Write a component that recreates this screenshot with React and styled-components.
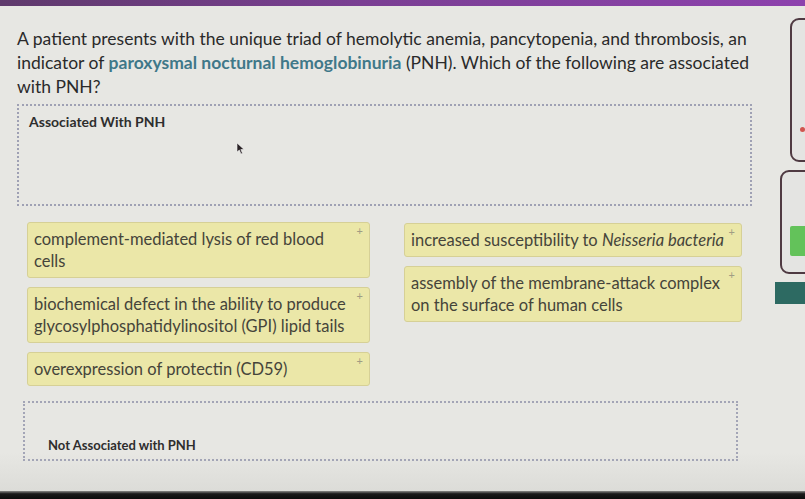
import React from 'react'
import styled, { createGlobalStyle } from 'styled-components'

const GlobalStyle = createGlobalStyle`
    html, body {
        margin: 0;
        padding: 0;
        height: 100%;
        overflow: hidden;
    }
    body {
        background-color: #e7e7e3;
        font-family: Lato, "Liberation Sans", sans-serif;
    }
    #root {
        height: 100%;
    }
`

const leftItems = [
    { id: 1, text: 'complement-mediated lysis of red blood cells' },
    { id: 2, text: 'biochemical defect in the ability to produce glycosylphosphatidylinositol (GPI) lipid tails' },
    { id: 3, text: 'overexpression of protectin (CD59)' },
]

const rightItems = [
    { id: 4, text: <>increased susceptibility to <i>Neisseria bacteria</i></> },
    { id: 5, text: 'assembly of the membrane-attack complex on the surface of human cells' },
]

const Cursor = () => (
    <CursorIcon width="9" height="13" viewBox="0 0 9 13">
        <path d="M1 1 L1 10 L3.3 8 L5 12 L6.5 11.3 L4.8 7.6 L8 7.4 Z" fill="#2a2326" stroke="#f4f4f4" strokeWidth="0.6" />
    </CursorIcon>
)

const App = () => {
    return (
        <Page>
            <GlobalStyle />
            <TopBar />

            <Body>
                <Main>
                    <Question>
                        A patient presents with the unique triad of hemolytic anemia, pancytopenia, and thrombosis, an
                        indicator of <Highlight>paroxysmal nocturnal hemoglobinuria</Highlight> (PNH). Which of the following are associated
                        with PNH?
                    </Question>

                    <DropZone $height={102}>
                        <ZoneLabel>Associated With PNH</ZoneLabel>
                        <Cursor />
                    </DropZone>

                    <CardArea>
                        <CardColumn $width={343}>
                            {leftItems.map(item => (
                                <Card key={item.id}>
                                    {item.text}
                                    <Plus>+</Plus>
                                </Card>
                            ))}
                        </CardColumn>
                        <CardColumn $width={338} $offset={1}>
                            {rightItems.map(item => (
                                <Card key={item.id}>
                                    {item.text}
                                    <Plus>+</Plus>
                                </Card>
                            ))}
                        </CardColumn>
                    </CardArea>

                    <BottomZone>
                        <ZoneLabel $small>Not Associated with PNH</ZoneLabel>
                    </BottomZone>
                </Main>

                <Rail>
                    <RailPanel $offset={15} $height={144}>
                        <RailDot />
                    </RailPanel>
                    <RailPanel $offset={5} $height={104}>
                        <GreenChip />
                    </RailPanel>
                    <TealBar />
                </Rail>
            </Body>

            <Bezel />
        </Page>
    )
}

export default App



const Page = styled.div`
    height: 100%;
    display: flex;
    flex-direction: column;
    overflow: hidden;
`

const TopBar = styled.div`
    height: 6px;
    flex-shrink: 0;
    background: linear-gradient(90deg, #5f3a6c 0%, #7a3f93 45%, #8d42ad 100%);
`

const Body = styled.div`
    display: flex;
    flex: 1;
    min-height: 0;
    background: linear-gradient(180deg, #e7e7e3 0%, #e7e7e3 92%, #dcdcd8 100%);
`

const Main = styled.div`
    width: 760px;
    flex-shrink: 0;
    padding: 21px 0 0 17px;
    box-sizing: border-box;
`

const Question = styled.p`
    margin: 0;
    width: 742px;
    font-size: 17.5px;
    line-height: 24px;
    color: #2a2a2a;
`

const Highlight = styled.span`
    font-weight: 700;
    color: #3f7889;
`

const DropZone = styled.div`
    position: relative;
    margin-top: 5px;
    width: 735px;
    height: ${p => p.$height}px;
    box-sizing: border-box;
    border: 2px dotted #9fa1b4;
    padding: 7px 10px;
`

const ZoneLabel = styled.div`
    font-size: ${p => (p.$small ? 13 : 14)}px;
    font-weight: 700;
    color: #2e2e2e;
`

const CursorIcon = styled.svg`
    position: absolute;
    left: 217px;
    top: 36px;
`

const CardArea = styled.div`
    display: flex;
    gap: 34px;
    margin: 16px 0 0 10px;
    align-items: flex-start;
`

const CardColumn = styled.div`
    width: ${p => p.$width}px;
    margin-top: ${p => p.$offset || 0}px;
    display: flex;
    flex-direction: column;
    gap: 9px;
`

const Card = styled.div`
    position: relative;
    background-color: #ebe7a8;
    border: 1px solid #d6d096;
    border-radius: 3px;
    padding: 5px 13px 5px 6px;
    font-size: 16.5px;
    line-height: 22px;
    color: #45443a;
`

const Plus = styled.span`
    position: absolute;
    top: 2px;
    right: 6px;
    font-size: 11px;
    line-height: 11px;
    color: #a09d84;
`

const BottomZone = styled.div`
    margin: 15px 0 0 6px;
    width: 715px;
    height: 60px;
    box-sizing: border-box;
    border: 2px dotted #a3a5b6;
    padding: 0 0 6px 23px;
    display: flex;
    flex-direction: column;
    justify-content: flex-end;
`

const Rail = styled.div`
    flex: 1;
    overflow: hidden;
    padding: 12px 0 0 15px;
    display: flex;
    flex-direction: column;
    gap: 8px;
`

const RailPanel = styled.div`
    margin-left: ${p => p.$offset}px;
    width: 60px;
    height: ${p => p.$height}px;
    flex-shrink: 0;
    box-sizing: border-box;
    border: 2px solid #4f3a42;
    border-radius: 9px;
    background-color: #e4e4e2;
    display: flex;
    flex-direction: column;
    justify-content: flex-end;
    padding: 0 0 28px 8px;
`

const RailDot = styled.div`
    width: 5px;
    height: 5px;
    border-radius: 50%;
    background-color: #d0554f;
`

const GreenChip = styled.div`
    width: 20px;
    height: 30px;
    margin-bottom: -12px;
    border-radius: 2px;
    background-color: #63c25a;
`

const TealBar = styled.div`
    width: 40px;
    height: 22px;
    flex-shrink: 0;
    background-color: #2d6a62;
`

const Bezel = styled.div`
    height: 8px;
    flex-shrink: 0;
    background: linear-gradient(180deg, #8a8a88 0%, #1a1a1a 35%, #0c0c0c 100%);
`
